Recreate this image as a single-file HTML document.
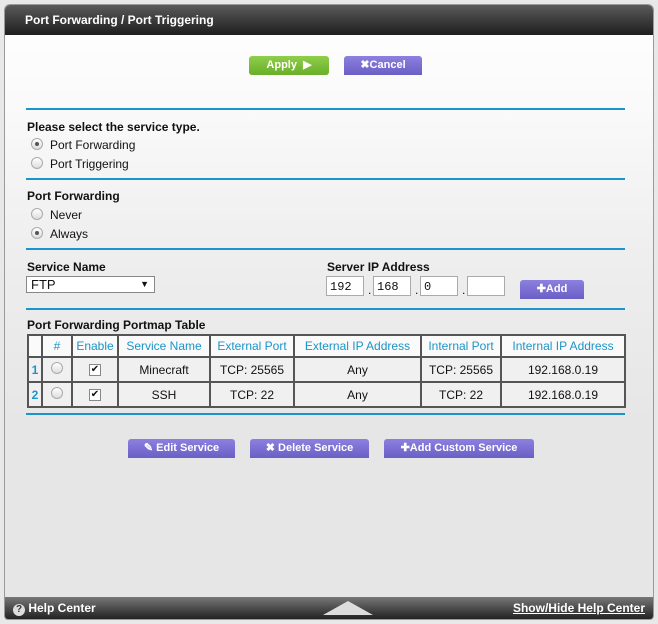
<!DOCTYPE html><html><head><style>
body{margin:0;width:658px;height:624px;background:#e8e8e8;font-family:"Liberation Sans",Arial,sans-serif;font-size:12px;color:#111;position:relative;overflow:hidden}
.frame{position:absolute;left:4px;top:4px;width:648px;height:614px;border:1px solid #9a9a9a;border-radius:6px 6px 4px 4px;background:linear-gradient(#fff 0,#fafafa 100px,#eeeeee 250px,#e6e6e6 420px);overflow:hidden}
.hdr{position:absolute;left:0;top:0;right:0;height:30px;background:linear-gradient(#5a5a5a,#1e1e1e);color:#fff;font-weight:bold;font-size:12px;line-height:30px;padding-left:20px}
.a{position:absolute}
.btn{position:absolute;height:19px;color:#fff;font-weight:bold;font-size:11px;line-height:19px;text-align:center;border-radius:3px 3px 0 0}
.p{background:linear-gradient(#8c80e0,#6a5fc4)}
.g{background:linear-gradient(#8fce4a,#6aae2a);border-radius:3px}
.line{position:absolute;left:21px;width:599px;height:2px;background:#1b95c9}
.b{font-weight:bold}
.r{position:absolute;width:10px;height:10px;border:1px solid #aaa;border-radius:50%;background:linear-gradient(#fff,#ddd)}
.r.on::after{content:"";position:absolute;left:3px;top:3px;width:4px;height:4px;border-radius:50%;background:#555}
table{position:absolute;left:22px;top:329px;width:597px;border-collapse:collapse;table-layout:fixed;background:#f0f0f0}
td{border:2px solid #555;height:23px;padding:0;text-align:center;font-size:12px}
th{border:2px solid #555;height:20px;padding:0;color:#1b95c9;font-size:12px;font-weight:normal;background:#fafafa;white-space:nowrap}
.n{color:#1b95c9;font-weight:bold}
.ip{position:absolute;top:271px;height:20px;border:1px solid #aaa;background:#fff;font-family:"Liberation Mono",monospace;font-size:12px;line-height:20px;padding-left:3px;box-sizing:border-box}
.ftr{position:absolute;left:0;right:0;bottom:0;height:22px;background:linear-gradient(#777,#222);color:#fff;font-weight:bold;font-size:12px;line-height:22px}
.cb{display:inline-block;width:10px;height:10px;border:1px solid #888;background:#fff;font-size:10px;line-height:10px;vertical-align:middle}
</style></head><body><div class="frame">
<div class="hdr">Port Forwarding / Port Triggering</div>
<div class="btn g" style="left:244px;top:51px;width:80px">Apply &nbsp;&#9654;</div>
<div class="btn p" style="left:339px;top:51px;width:78px">&#10006;Cancel</div>
<div class="line" style="top:103px"></div>
<div class="a b" style="left:22px;top:115px">Please select the service type.</div>
<div class="r on" style="left:26px;top:133px"></div><div class="a" style="left:45px;top:133px">Port Forwarding</div>
<div class="r" style="left:26px;top:152px"></div><div class="a" style="left:45px;top:152px">Port Triggering</div>
<div class="line" style="top:173px"></div>
<div class="a b" style="left:22px;top:184px">Port Forwarding</div>
<div class="r" style="left:26px;top:203px"></div><div class="a" style="left:45px;top:203px">Never</div>
<div class="r on" style="left:26px;top:222px"></div><div class="a" style="left:45px;top:222px">Always</div>
<div class="line" style="top:243px"></div>
<div class="a b" style="left:22px;top:255px">Service Name</div>
<div class="a" style="left:21px;top:271px;width:129px;height:17px;border:1px solid #888;background:#fff;box-sizing:border-box;font-size:13px;line-height:15px;padding-left:4px">FTP<span style="position:absolute;right:5px;font-size:9px">&#9660;</span></div>
<div class="a b" style="left:322px;top:255px">Server IP Address</div>
<div class="ip" style="left:321px;width:38px">192</div><div class="a" style="left:363px;top:278px">.</div>
<div class="ip" style="left:368px;width:38px">168</div><div class="a" style="left:410px;top:278px">.</div>
<div class="ip" style="left:415px;width:38px">0</div><div class="a" style="left:457px;top:278px">.</div>
<div class="ip" style="left:462px;width:38px"></div>
<div class="btn p" style="left:515px;top:275px;width:64px">&#10010;Add</div>
<div class="line" style="top:303px"></div>
<div class="a b" style="left:22px;top:313px">Port Forwarding Portmap Table</div>
<table><colgroup><col style="width:14px"><col style="width:30px"><col style="width:46px"><col style="width:92px"><col style="width:84px"><col style="width:127px"><col style="width:80px"><col style="width:124px"></colgroup>
<tr><th></th><th>#</th><th>Enable</th><th>Service Name</th><th>External Port</th><th>External IP Address</th><th>Internal Port</th><th>Internal IP Address</th></tr>
<tr><td class="n">1</td><td><span class="r" style="position:relative;display:inline-block"></span></td><td><span class="cb">&#10004;</span></td><td>Minecraft</td><td>TCP: 25565</td><td>Any</td><td>TCP: 25565</td><td>192.168.0.19</td></tr>
<tr><td class="n">2</td><td><span class="r" style="position:relative;display:inline-block"></span></td><td><span class="cb">&#10004;</span></td><td>SSH</td><td>TCP: 22</td><td>Any</td><td>TCP: 22</td><td>192.168.0.19</td></tr></table>
<div class="line" style="top:408px"></div>
<div class="btn p" style="left:123px;top:434px;width:107px">&#9998; Edit Service</div>
<div class="btn p" style="left:245px;top:434px;width:119px">&#10006; Delete Service</div>
<div class="btn p" style="left:379px;top:434px;width:150px">&#10010;Add Custom Service</div>
<div class="ftr"><span style="margin-left:8px;display:inline-block;width:12px;height:12px;border-radius:50%;background:#ddd;color:#333;font-size:10px;line-height:12px;text-align:center">?</span> Help Center
<div style="position:absolute;left:318px;top:4px;width:0;height:0;border-left:25px solid transparent;border-right:25px solid transparent;border-bottom:14px solid #ddd"></div>
<span style="position:absolute;right:8px;text-decoration:underline">Show/Hide Help Center</span></div>
</div></body></html>
